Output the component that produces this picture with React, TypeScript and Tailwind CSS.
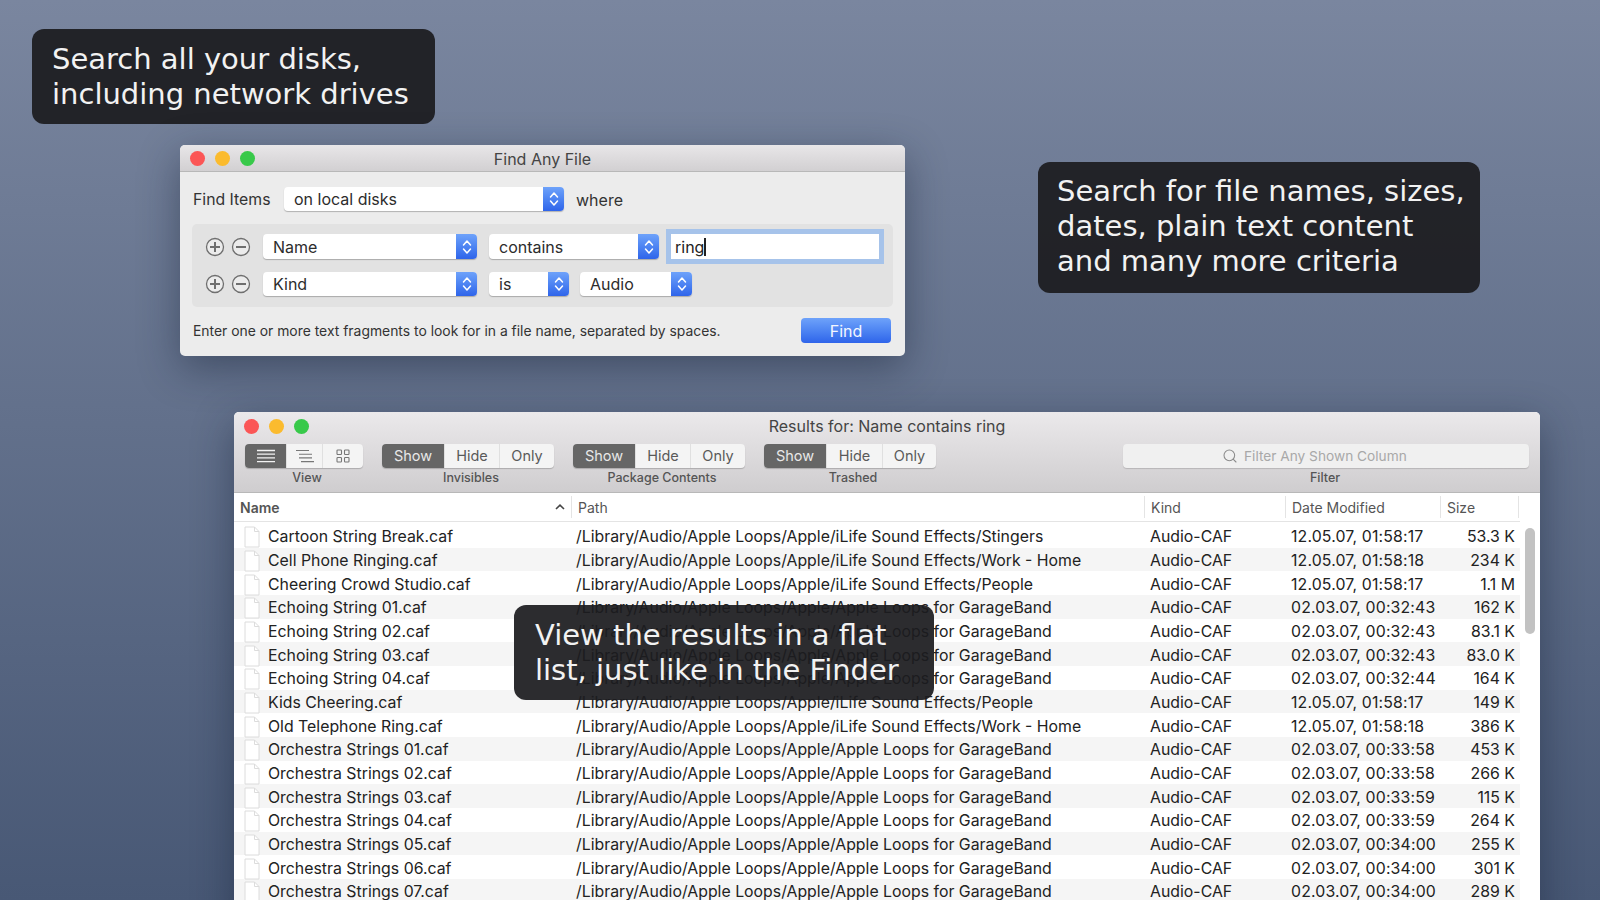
import { Search } from 'lucide-react';

const APPLE = '/Library/Audio/Apple Loops/Apple/';
const ILIFE = APPLE + 'iLife Sound Effects/';
const GB = APPLE + 'Apple Loops for GarageBand';

const ROWS: [string, string, string, string][] = [
  ['Cartoon String Break.caf', ILIFE + 'Stingers', '12.05.07, 01:58:17', '53.3 K'],
  ['Cell Phone Ringing.caf', ILIFE + 'Work - Home', '12.05.07, 01:58:18', '234 K'],
  ['Cheering Crowd Studio.caf', ILIFE + 'People', '12.05.07, 01:58:17', '1.1 M'],
  ['Echoing String 01.caf', GB, '02.03.07, 00:32:43', '162 K'],
  ['Echoing String 02.caf', GB, '02.03.07, 00:32:43', '83.1 K'],
  ['Echoing String 03.caf', GB, '02.03.07, 00:32:43', '83.0 K'],
  ['Echoing String 04.caf', GB, '02.03.07, 00:32:44', '164 K'],
  ['Kids Cheering.caf', ILIFE + 'People', '12.05.07, 01:58:17', '149 K'],
  ['Old Telephone Ring.caf', ILIFE + 'Work - Home', '12.05.07, 01:58:18', '386 K'],
  ['Orchestra Strings 01.caf', GB, '02.03.07, 00:33:58', '453 K'],
  ['Orchestra Strings 02.caf', GB, '02.03.07, 00:33:58', '266 K'],
  ['Orchestra Strings 03.caf', GB, '02.03.07, 00:33:59', '115 K'],
  ['Orchestra Strings 04.caf', GB, '02.03.07, 00:33:59', '264 K'],
  ['Orchestra Strings 05.caf', GB, '02.03.07, 00:34:00', '255 K'],
  ['Orchestra Strings 06.caf', GB, '02.03.07, 00:34:00', '301 K'],
  ['Orchestra Strings 07.caf', GB, '02.03.07, 00:34:00', '289 K'],
];

function TrafficLights() {
  return (
    <div className="flex gap-[10px]">
      <span className="w-[15px] h-[15px] rounded-full bg-[#fb5656]" />
      <span className="w-[15px] h-[15px] rounded-full bg-[#fbbb2e]" />
      <span className="w-[15px] h-[15px] rounded-full bg-[#38c94a]" />
    </div>
  );
}

function Stepper() {
  return (
    <div className="w-[21px] self-stretch shrink-0 rounded-r-[4px] bg-gradient-to-b from-[#6ea2fa] to-[#2f64ea] flex items-center justify-center">
      <svg width="10" height="16" viewBox="0 0 10 16" fill="none" stroke="white" strokeWidth="1.5" strokeLinecap="round" strokeLinejoin="round">
        <path d="M1.5 6 L5 2 L8.5 6" />
        <path d="M1.5 10 L5 14 L8.5 10" />
      </svg>
    </div>
  );
}

function Popup({ label, className }: { label: string; className: string }) {
  return (
    <div className={`${className} flex items-center bg-white rounded-[4px] shadow-[0_1px_1px_rgba(0,0,0,0.25)] text-[16px] text-[#2c2c2c]`}>
      <span className="flex-1 pl-[10px]">{label}</span>
      <Stepper />
    </div>
  );
}

function RoundButton({ minus }: { minus?: boolean }) {
  return (
    <svg width="20" height="20" viewBox="0 0 20 20" fill="none" stroke="#6f6f6f" className="shrink-0">
      <circle cx="10" cy="10" r="8.5" strokeWidth="1.3" fill="#ececec" />
      <path d="M5 10 H15" strokeWidth="2" />
      {!minus && <path d="M10 5 V15" strokeWidth="2" />}
    </svg>
  );
}

function RuleRow({ children, height }: { children: React.ReactNode; height: string }) {
  return (
    <div className={`flex items-center ${height}`}>
      <div className="flex gap-[6px] w-[71px] pl-[13px]">
        <RoundButton />
        <RoundButton minus />
      </div>
      {children}
    </div>
  );
}

function Segmented({ labels, width }: { labels: string[]; width: string[] }) {
  return (
    <div className="flex h-[24px] rounded-[4px] bg-[#f4f4f4] shadow-[0_1px_1px_rgba(0,0,0,0.2)] text-[14.5px] text-[#5a5a5a]">
      {labels.map((l, i) => (
        <div
          key={l}
          className={`flex items-center justify-center ${width[i]} ${i === 0 ? 'bg-[#666666] text-[#e8e8e8] rounded-l-[4px]' : 'border-l border-[#e0e0e0]'}`}
        >
          {l}
        </div>
      ))}
    </div>
  );
}

function ToolGroup({ label, labelClass = 'pl-[6px]', children }: { label: string; labelClass?: string; children: React.ReactNode }) {
  return (
    <div className="flex flex-col items-center">
      {children}
      <span className={`mt-[1px] text-[12.5px] leading-[18px] font-medium text-[#555] ${labelClass}`}>{label}</span>
    </div>
  );
}

function FileIcon() {
  return (
    <svg width="16" height="22" viewBox="0 0 16 22" className="shrink-0 -my-1">
      <path d="M1 1 H10.5 L15 5.5 V21 H1 Z" fill="white" stroke="#dcdcdc" strokeWidth="1" strokeLinejoin="round" />
      <path d="M10.5 1 V5.5 H15" fill="none" stroke="#dcdcdc" strokeWidth="1" />
    </svg>
  );
}

function Callout({ lines, className }: { lines: string[]; className: string }) {
  return (
    <div className={`absolute ${className} rounded-[12px] bg-[#1c1c1f]/[.93] font-['DejaVu_Sans',sans-serif] text-[29px] leading-[35px] text-[#f2f2f2]`}>
      {lines.map((l) => (
        <div key={l}>{l}</div>
      ))}
    </div>
  );
}

export default function App() {
  return (
    <div className="relative w-[1600px] h-[900px] overflow-hidden bg-gradient-to-b from-[#7a869f] to-[#485875] font-['Inter',sans-serif]">
      <Callout
        lines={['Search all your disks,', 'including network drives']}
        className="left-[32px] top-[29px] w-[403px] h-[95px] pl-[20px] pt-[13px]"
      />
      <Callout
        lines={['Search for file names, sizes,', 'dates, plain text content', 'and many more criteria']}
        className="left-[1038px] top-[162px] w-[442px] h-[131px] pl-[19px] pt-[12px]"
      />

      {/* Find window */}
      <div className="absolute left-[180px] top-[145px] w-[725px] h-[211px] rounded-[5px] overflow-hidden bg-[#ececec] shadow-[0_12px_40px_rgba(20,30,50,0.45)]">
        <div className="relative h-[27px] flex items-center pl-[9.5px] bg-gradient-to-b from-[#e8e6e8] to-[#d2d0d2] border-b border-[#b8b8b8]">
          <TrafficLights />
          <div className="absolute inset-0 pt-[1px] flex items-center justify-center text-[16px] text-[#444]">Find Any File</div>
        </div>
        <div className="flex items-center h-[24px] mt-[15px] pl-[13px]">
          <span className="w-[91px] pt-[2px] text-[15.8px] text-[#333]">Find Items</span>
          <Popup label="on local disks" className="w-[280px] h-[24px]" />
          <span className="ml-[12px] pt-[2px] text-[16px] text-[#333]">where</span>
        </div>
        <div className="flex flex-col gap-[13px] mx-[12px] mt-[13px] h-[83px] pt-[10px] rounded-[5px] bg-[#e2e2e2]">
          <RuleRow height="h-[25px]">
            <Popup label="Name" className="w-[214px] h-[25px]" />
            <Popup label="contains" className="w-[170px] h-[25px] ml-[12px]" />
            <div className="ml-[12px] w-[208px] h-[25px] bg-white outline-[5px] outline-[#a6c3ea] flex items-center pl-[4px] pt-[1px] text-[16px] text-[#222]">
              ring<span className="w-[1.5px] h-[18px] bg-[#222]" />
            </div>
          </RuleRow>
          <RuleRow height="h-[24px]">
            <Popup label="Kind" className="w-[214px] h-[24px]" />
            <Popup label="is" className="w-[80px] h-[24px] ml-[12px]" />
            <Popup label="Audio" className="w-[112px] h-[24px] ml-[11px]" />
          </RuleRow>
        </div>
        <div className="flex items-center justify-between ml-[13px] mr-[14px] mt-[11px]">
          <span className="pt-[2px] text-[13.9px] text-[#333]">Enter one or more text fragments to look for in a file name, separated by spaces.</span>
          <div className="w-[90px] h-[25px] rounded-[4px] bg-gradient-to-b from-[#6ea2fa] to-[#2f64ea] flex items-center justify-center text-[16px] text-[#f4f7ff]">
            Find
          </div>
        </div>
      </div>

      {/* Results window */}
      <div className="absolute left-[234px] top-[412px] w-[1306px] h-[520px] rounded-t-[5px] overflow-hidden bg-white shadow-[0_12px_40px_rgba(20,30,50,0.45)]">
        <div className="relative h-[81px] bg-gradient-to-b from-[#ebe9eb] to-[#cfcdcf] border-b border-[#b8b8b8]">
          <div className="flex items-center h-[32px] pl-[10px] pb-[3px]">
            <TrafficLights />
          </div>
          <div className="absolute top-0 inset-x-0 h-[28px] flex items-center justify-center text-[16px] text-[#444]">
            Results for: Name contains ring
          </div>
          <div className="flex items-start pl-[11px]">
            <ToolGroup label="View">
              <div className="flex h-[24px] rounded-[4px] bg-[#f4f4f4] shadow-[0_1px_1px_rgba(0,0,0,0.2)]">
                <div className="w-[41px] bg-[#666666] rounded-l-[4px] flex items-center justify-center">
                  <svg width="20" height="14" viewBox="0 0 20 14" stroke="#f2f2f2" strokeWidth="1.3">
                    <path d="M1 1.5 H19 M1 5.2 H19 M1 8.9 H19 M1 12.6 H19" />
                  </svg>
                </div>
                <div className="w-[36px] flex items-center justify-center border-l border-[#e0e0e0]">
                  <svg width="20" height="14" viewBox="0 0 20 14" stroke="#777" strokeWidth="1.1">
                    <path d="M1 1.5 H14 M4 5.2 H17 M4 8.9 H17 M6 12.6 H19" />
                  </svg>
                </div>
                <div className="w-[41px] flex items-center justify-center border-l border-[#e0e0e0]">
                  <svg width="14" height="14" viewBox="0 0 14 14" fill="none" stroke="#777" strokeWidth="1.1">
                    <rect x="1" y="1" width="4.5" height="4.5" rx="0.8" />
                    <rect x="8.5" y="1" width="4.5" height="4.5" rx="0.8" />
                    <rect x="1" y="8.5" width="4.5" height="4.5" rx="0.8" />
                    <rect x="8.5" y="8.5" width="4.5" height="4.5" rx="0.8" />
                  </svg>
                </div>
              </div>
            </ToolGroup>
            <div className="w-[19px]" />
            <ToolGroup label="Invisibles">
              <Segmented labels={['Show', 'Hide', 'Only']} width={['w-[62px]', 'w-[55px]', 'w-[55px]']} />
            </ToolGroup>
            <div className="w-[19px]" />
            <ToolGroup label="Package Contents">
              <Segmented labels={['Show', 'Hide', 'Only']} width={['w-[62px]', 'w-[55px]', 'w-[55px]']} />
            </ToolGroup>
            <div className="w-[19px]" />
            <ToolGroup label="Trashed">
              <Segmented labels={['Show', 'Hide', 'Only']} width={['w-[62px]', 'w-[56px]', 'w-[54px]']} />
            </ToolGroup>
            <div className="w-[187px]" />
            <ToolGroup label="Filter" labelClass="pr-[2px]">
              <div className="w-[406px] h-[24px] pl-[99px] rounded-[4px] bg-[#f0f0f0] shadow-[0_1px_1px_rgba(0,0,0,0.15)] flex items-center gap-[6px] text-[13.7px] text-[#a8a8a8]">
                <Search size={16} strokeWidth={1.6} className="text-[#8c8c8c]" />
                Filter Any Shown Column
              </div>
            </ToolGroup>
          </div>
        </div>

        {/* Column header */}
        <div className="flex h-[29px] border-b border-[#e4e4e4] text-[14px] text-[#555] w-[1286px]">
          <div className="w-[338px] flex items-center justify-between pl-[6px] pr-[6px] font-semibold border-r border-[#e4e4e4] my-[3px]">
            Name
            <svg width="10" height="6" viewBox="0 0 10 6" fill="none" stroke="#444" strokeWidth="1.6">
              <path d="M1 5 L5 1.2 L9 5" />
            </svg>
          </div>
          <div className="w-[573px] flex items-center pl-[6px] border-r border-[#e4e4e4] my-[3px]">Path</div>
          <div className="w-[141px] flex items-center pl-[6px] border-r border-[#e4e4e4] my-[3px]">Kind</div>
          <div className="w-[155px] flex items-center pl-[6px] border-r border-[#e4e4e4] my-[3px]">Date Modified</div>
          <div className="w-[78px] flex items-center pl-[6px] border-r border-[#e4e4e4] my-[3px]">Size</div>
        </div>

        {/* Rows */}
        <div className="relative pt-[2px]">
          {ROWS.map((r, i) => (
            <div
              key={r[0]}
              className={`flex items-center h-[23.67px] w-[1286px] pt-[3px] text-[15.85px] text-[#222] ${i % 2 === 1 ? 'bg-[#f5f5f5]' : 'bg-white'}`}
            >
              <div className="w-[342px] flex items-center pl-[10px] gap-[8px]">
                <FileIcon />
                <span>{r[0]}</span>
              </div>
              <div className="w-[574px]">{r[1]}</div>
              <div className="w-[141px]">Audio-CAF</div>
              <div className="w-[156px] tracking-[0.15px]">{r[2]}</div>
              <div className="w-[68px] text-right">{r[3]}</div>
            </div>
          ))}
          <div className="absolute left-[1291px] top-[6px] w-[10px] h-[106px] rounded-full bg-[#c2c2c2]" />
        </div>
      </div>

      <Callout
        lines={['View the results in a flat', 'list, just like in the Finder']}
        className="left-[514px] top-[605px] w-[420px] h-[95px] pl-[21px] pt-[13px]"
      />
    </div>
  );
}
